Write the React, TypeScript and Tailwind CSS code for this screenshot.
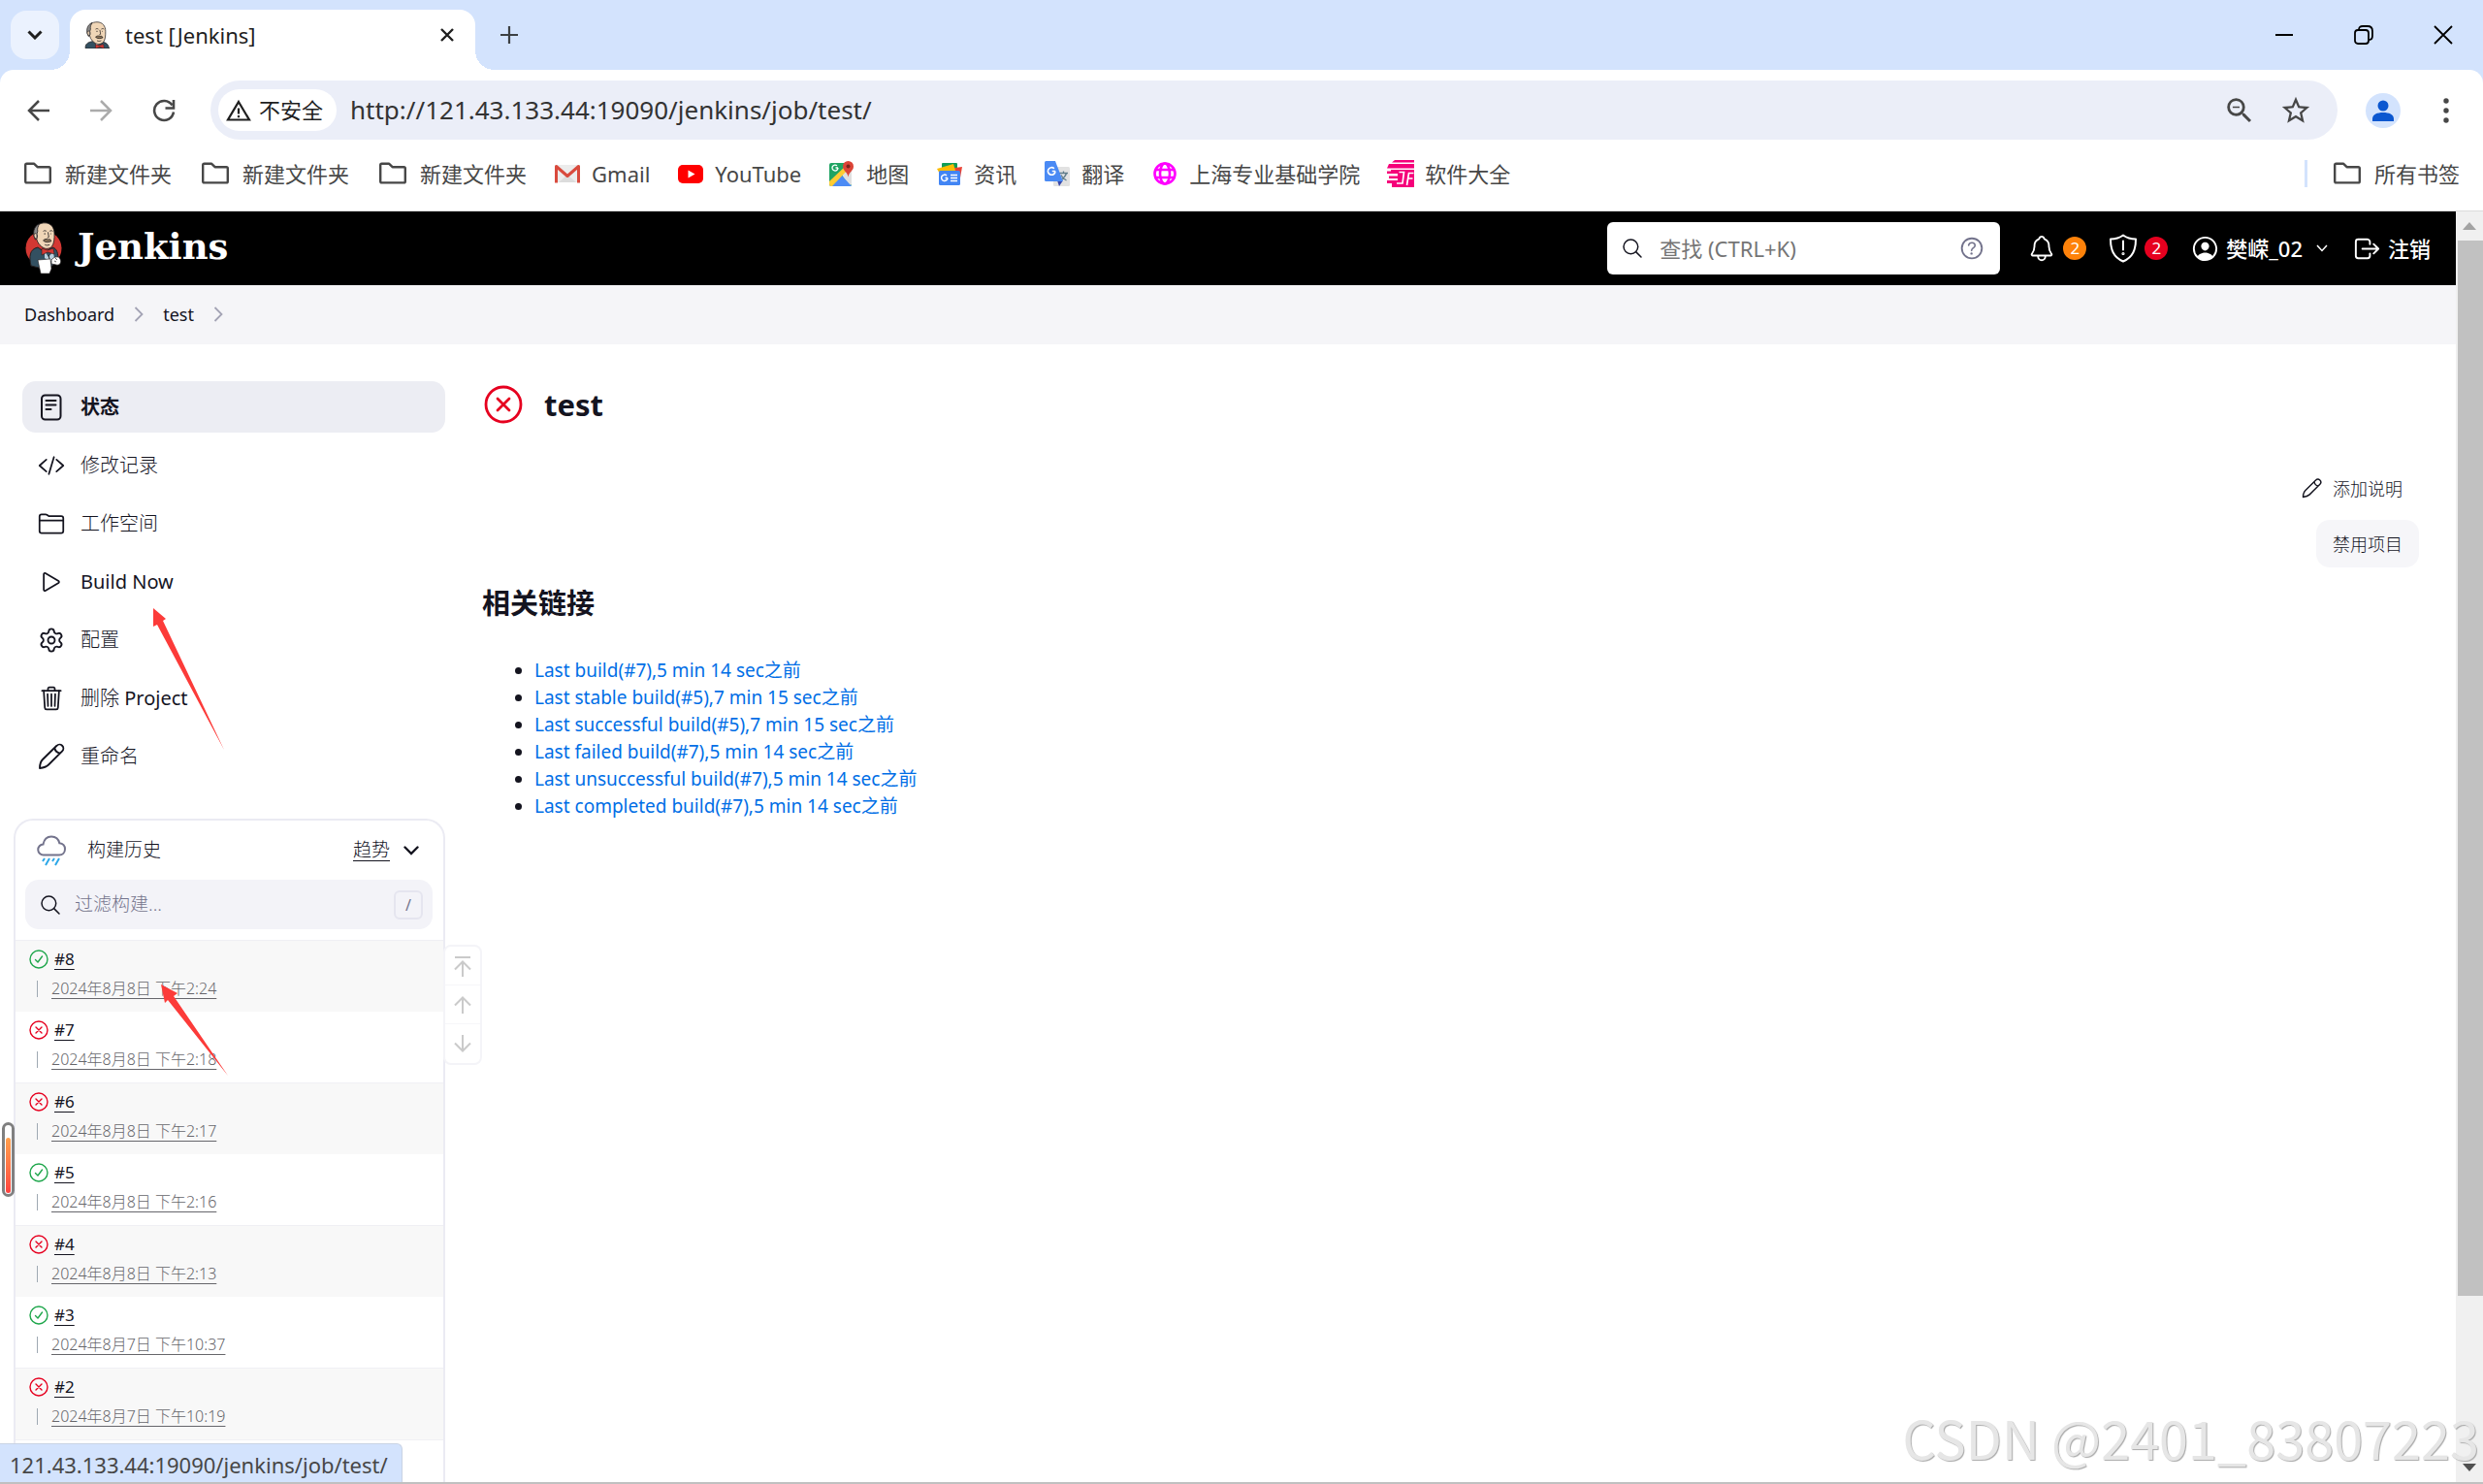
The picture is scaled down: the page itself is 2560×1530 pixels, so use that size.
import type { ReactNode } from "react";
import { Settings } from "lucide-react";
import {
  IoCodeSlashOutline,
  IoFolderOutline,
  IoHelpCircleOutline,
  IoLogOutOutline,
  IoNotificationsOutline,
  IoPersonCircleOutline,
  IoPlayOutline,
  IoSearchOutline,
  IoTrashOutline,
} from "react-icons/io5";
import { MdOutlineZoomOut, MdStarOutline } from "react-icons/md";

type BuildStatus = "success" | "failed";

interface Build {
  id: number;
  status: BuildStatus;
  date: string;
}

const BUILDS: Build[] = [
  { id: 8, status: "success", date: "2024年8月8日 下午2:24" },
  { id: 7, status: "failed", date: "2024年8月8日 下午2:18" },
  { id: 6, status: "failed", date: "2024年8月8日 下午2:17" },
  { id: 5, status: "success", date: "2024年8月8日 下午2:16" },
  { id: 4, status: "failed", date: "2024年8月8日 下午2:13" },
  { id: 3, status: "success", date: "2024年8月7日 下午10:37" },
  { id: 2, status: "failed", date: "2024年8月7日 下午10:19" },
];

const PERMALINKS = [
  "Last build(#7),5 min 14 sec之前",
  "Last stable build(#5),7 min 15 sec之前",
  "Last successful build(#5),7 min 15 sec之前",
  "Last failed build(#7),5 min 14 sec之前",
  "Last unsuccessful build(#7),5 min 14 sec之前",
  "Last completed build(#7),5 min 14 sec之前",
];

function StatusIcon({ status, className }: { status: BuildStatus; className: string }) {
  const failed = status === "failed";
  return (
    <svg
      viewBox="0 0 40 40"
      fill="none"
      stroke={failed ? "#e6001f" : "#1ea64b"}
      strokeWidth={2.8}
      strokeLinecap="round"
      strokeLinejoin="round"
      className={className}
      aria-hidden="true"
    >
      <circle cx="20" cy="20" r="18" />
      {failed ? <path d="M14 14l12 12M26 14L14 26" /> : <path d="M13 21l5 5 9-12" />}
    </svg>
  );
}

function ButlerHead() {
  return (
    <>
      <path d="M10 14C7 4 15 1 21 1c8 0 12 6 12 13 0 5 0 11-3 15-3 3-8 4-12 1-5-3-8-8-8-16z" fill="#f0d6b7" stroke="#231f20" />
      <path d="M9 21C5 13 7 5 14 2c-1 3-3 5-2 9l-1 3c1 3 1 6-2 7z" fill="#8a8a8a" stroke="#231f20" />
      <path d="M10 14c-3-2-4 4 0 6" fill="#f0d6b7" stroke="#231f20" />
      <path d="M19 11c1-1 3-1 4 0M27 11c1-1 3-1 4 0M25 12l1 6-2 1M20 14h2M28 14h1" fill="none" stroke="#231f20" />
      <path d="M19 22c2-2 4-2 6-1 2-1 4 0 4 2-3 1-7 2-10-1z" fill="#8b7355" stroke="#231f20" />
      <path d="M21 27c2 1 4 1 6 0" fill="none" stroke="#231f20" />
    </>
  );
}

function JenkinsFavicon() {
  return (
    <svg viewBox="4 0 34 38" className="h-7 w-7" aria-hidden="true">
      <path d="M5 38c-1-6 3-9 10-10l6 6 8-5c6 1 8 4 9 9z" fill="#335061" stroke="#231f20" />
      <ButlerHead />
      <path d="M19 32l5 2 6-2 1 6-6-2-6 2z" fill="#d33833" stroke="#231f20" strokeWidth=".6" />
    </svg>
  );
}

function JenkinsLogo() {
  return (
    <svg viewBox="0 0 38 54" className="h-[54px] w-[38px]" aria-hidden="true">
      <ellipse cx="19" cy="27" rx="18.500" ry="18" fill="#d33833" />
      <path d="M6 45c-2-9-2-17 7-19l7 5 8-5c5 1 6 7 6 13l-6 6-10 3z" fill="#335061" stroke="#231f20" />
      <path d="M20 30l4 6 5-6 1 8-5 3-5-4z" fill="#b9cfdc" />
      <path d="M24 34l1 4" stroke="#231f20" />
      <g transform="translate(3 0) scale(.82 .86)">
        <ButlerHead />
      </g>
      <path d="M17 27l6 2 6-2 1 6-7-2-6 3z" fill="#d33833" stroke="#231f20" strokeWidth=".6" />
      <path d="M13 39l13-1 1 10-2 5h-9z" fill="#fff" stroke="#231f20" strokeWidth=".6" />
      <path d="M27 39c3-4 8-4 9-1 2 4-1 7-4 6l-5-1z" fill="#fff" stroke="#231f20" strokeWidth=".7" />
      <path d="M30 40l2 1M31 37l2 2" stroke="#231f20" strokeWidth=".7" />
    </svg>
  );
}

function PencilIcon({ className }: { className: string }) {
  return (
    <svg viewBox="0 0 28 28" fill="none" stroke="currentColor" strokeWidth={1.9} strokeLinejoin="round" strokeLinecap="round" className={className} aria-hidden="true">
      <path d="M2 26c0-4 1-7 3-9L19.500 2.800a3.800 3.800 0 0 1 5.700 5.500L11 22.500c-2 2-5 3-9 3.500zM17.300 5c.5 3 2.400 5 5.600 5.600" />
    </svg>
  );
}

function DocumentIcon() {
  return (
    <svg viewBox="0 0 28 28" fill="none" stroke="currentColor" strokeWidth={2} strokeLinecap="round" className="size-7" aria-hidden="true">
      <rect x="4" y="1.500" width="19.500" height="25" rx="3.500" />
      <path d="M8.500 7h10M8.500 11.500h10M8.500 16h5" />
    </svg>
  );
}

function BookmarkFolder() {
  return (
    <svg viewBox="0 0 28 28" fill="none" stroke="#474747" strokeWidth={2.400} strokeLinejoin="round" className="mx-[3px] size-7" aria-hidden="true">
      <path d="M1.200 5.200q0-1.400 1.400-1.400h7.600l3.400 3.400h11.800q1.400 0 1.400 1.400v13.400q0 1.400-1.400 1.400H2.600q-1.400 0-1.400-1.400z" />
    </svg>
  );
}

function GmailIcon() {
  return (
    <svg viewBox="0 0 28 28" className="size-7" aria-hidden="true">
      <path d="M1 5h26v18H1z" fill="#ececec" />
      <path d="M5 23l9-8 9 8z" fill="#dcdcdc" />
      <path d="M2.500 23.500V6.500L14 16.500l11.500-10v17" fill="none" stroke="#d94a3d" strokeWidth={3} strokeLinejoin="round" />
    </svg>
  );
}

function YouTubeIcon() {
  return (
    <svg viewBox="0 0 28 28" className="size-7" aria-hidden="true">
      <rect x="1" y="5" width="26" height="19" rx="5" fill="#f00" />
      <path d="M11.500 10.500l7 4-7 4z" fill="#fff" />
    </svg>
  );
}

function MapsIcon() {
  return (
    <svg viewBox="0 0 28 28" className="size-7" aria-hidden="true">
      <rect x="1" y="3" width="23" height="24" rx="2" fill="#1fa463" />
      <path d="M13 14l11-5v16l-2 2z" fill="#e0e0e0" />
      <path d="M2 27l11-12 11 12z" fill="#4c8bf5" />
      <path d="M1 22L18 6l3 3L4 27H3q-2 0-2-2z" fill="#fc3" />
      <path d="M10 8H7.500M10 8a3 3 0 1 1-1-2.200" fill="none" stroke="#fff" strokeWidth={1.300} />
      <path d="M20.500 1a5.500 5.500 0 0 1 5.500 5.500c0 5-4.500 5-5.500 11-1-6-5.500-6-5.500-11A5.500 5.500 0 0 1 20.500 1z" fill="#db4437" />
      <circle cx="20.500" cy="6.500" r="2" fill="#7a231b" />
    </svg>
  );
}

function NewsIcon() {
  return (
    <svg viewBox="0 0 28 28" className="size-7" aria-hidden="true">
      <rect x="6" y="3" width="16" height="12" rx="1" fill="#0f9d58" />
      <path d="M12 9l15-2-3 17-8-3z" fill="#ea4335" />
      <path d="M1 9l17-5 3 10-15 4z" fill="#fbbc04" />
      <rect x="3" y="11" width="22" height="15" rx="1.500" fill="#4285f4" />
      <path d="M12 18.500H9.500M12 18.500a3.200 3.200 0 1 1-1-2.500M15 15.500h7M15 18.500h7M15 21.500h7" fill="none" stroke="#fff" strokeWidth={1.500} />
    </svg>
  );
}

function TranslateIcon() {
  return (
    <svg viewBox="0 0 28 28" className="size-7" aria-hidden="true">
      <rect x="10" y="7" width="17" height="20" rx="1.500" fill="#e2e2e2" />
      <path d="M16 13.500h9M20.500 11.500v2M23.500 13.500c-1 4-4 6-6 7.500M18 15.500c1 2.500 3.500 4.500 5.500 5.500" fill="none" stroke="#607d8b" strokeWidth={1.300} />
      <path d="M14 21h6l-4 6z" fill="#3949ab" />
      <path d="M2.500 1H12l8 21H2.500Q1 22 1 20.500v-18Q1 1 2.500 1z" fill="#4a8af4" />
      <path d="M12 11.500H8.800M12 11.500a3.800 3.800 0 1 1-1.100-2.700" fill="none" stroke="#fff" strokeWidth={1.600} />
    </svg>
  );
}

function MagentaGlobeIcon() {
  return (
    <svg viewBox="0 0 28 28" fill="none" stroke="#f0f" strokeWidth={2.600} className="size-7" aria-hidden="true">
      <circle cx="14" cy="14" r="10.500" />
      <ellipse cx="14" cy="14" rx="5" ry="10.500" />
      <path d="M4.500 10h19M4.500 18h19" />
    </svg>
  );
}

function PinkBrandIcon() {
  return (
    <svg viewBox="0 0 28 28" className="size-7" aria-hidden="true">
      <path d="M8 0h20v2.500H5zM2 4h26v4.500H0zM4 10h24v18H5v-4H0v-3h11v-2H2v-2.500h9V14H0v-2.500h4z" fill="#f5007a" />
      <path d="M12.500 12.500h5l-1.500 11.500h-6M20.500 26l2-12.500h5M21.500 19h5" fill="none" stroke="#fff" strokeWidth={1.700} />
    </svg>
  );
}

const BOOKMARKS: { label: string; icon: ReactNode }[] = [
  { label: "新建文件夹", icon: <BookmarkFolder /> },
  { label: "新建文件夹", icon: <BookmarkFolder /> },
  { label: "新建文件夹", icon: <BookmarkFolder /> },
  { label: "Gmail", icon: <GmailIcon /> },
  { label: "YouTube", icon: <YouTubeIcon /> },
  { label: "地图", icon: <MapsIcon /> },
  { label: "资讯", icon: <NewsIcon /> },
  { label: "翻译", icon: <TranslateIcon /> },
  { label: "上海专业基础学院", icon: <MagentaGlobeIcon /> },
  { label: "软件大全", icon: <PinkBrandIcon /> },
];

const TASKS: { id: string; label: ReactNode; icon: ReactNode; active?: boolean }[] = [
  { id: "status", label: "状态", icon: <DocumentIcon />, active: true },
  { id: "changes", label: "修改记录", icon: <IoCodeSlashOutline className="size-7" /> },
  { id: "workspace", label: "工作空间", icon: <IoFolderOutline className="size-7" /> },
  { id: "build", label: <span className="font-normal">Build Now</span>, icon: <IoPlayOutline className="size-7" /> },
  { id: "configure", label: "配置", icon: <Settings className="size-7" strokeWidth={1.6} /> },
  {
    id: "delete",
    label: (
      <span>
        删除 <span className="font-normal">Project</span>
      </span>
    ),
    icon: <IoTrashOutline className="size-7" />,
  },
  { id: "rename", label: "重命名", icon: <PencilIcon className="size-7" /> },
];

function TabStrip() {
  return (
    <div className="flex h-[72px] shrink-0 items-center">
      <button
        type="button"
        aria-label="Search tabs"
        className="ml-[11px] flex size-[50px] items-center justify-center rounded-2xl bg-[#ebf2fe]"
      >
        <svg viewBox="0 0 16 10" fill="none" stroke="#1f1f1f" strokeWidth={3} className="w-4" aria-hidden="true">
          <path d="M1.500 1.500L8 8l6.500-6.500" />
        </svg>
      </button>
      <div className="relative ml-[11px] flex w-[418px] items-center self-stretch pt-[10px]">
        <div className="flex h-full w-full items-center rounded-t-2xl bg-white pr-[21px] pb-[10px] pl-[14px]">
          <JenkinsFavicon />
          <span className="ml-[15px] flex-1 text-[22px] text-[#1f1f1f]">test [Jenkins]</span>
          <button type="button" aria-label="Close tab">
            <svg viewBox="0 0 16 16" stroke="#1f1f1f" strokeWidth={2.400} className="size-4" aria-hidden="true">
              <path d="M2 2l12 12M14 2L2 14" />
            </svg>
          </button>
        </div>
        <span className="absolute bottom-0 -left-5 size-5 bg-[radial-gradient(circle_at_top_left,transparent_20px,#fff_20px)]" />
        <span className="absolute -right-5 bottom-0 size-5 bg-[radial-gradient(circle_at_top_right,transparent_20px,#fff_20px)]" />
      </div>
      <button type="button" aria-label="New tab" className="ml-[26px]">
        <svg viewBox="0 0 18 18" stroke="#3c4043" strokeWidth={2.200} className="size-[18px]" aria-hidden="true">
          <path d="M9 0v18M0 9h18" />
        </svg>
      </button>
      <div className="ml-auto flex items-center gap-[62px] pr-[31px]">
        <button type="button" aria-label="Minimize">
          <svg viewBox="0 0 20 20" stroke="#000" strokeWidth={2} className="size-5" aria-hidden="true">
            <path d="M1 10h18" />
          </svg>
        </button>
        <button type="button" aria-label="Restore">
          <svg viewBox="0 0 20 20" fill="none" stroke="#000" strokeWidth={1.800} className="size-5" aria-hidden="true">
            <rect x="1" y="5" width="14" height="14" rx="3" />
            <path d="M5 4.500Q5 1 9 1h5q5 0 5 5v5q0 4-3.500 4" />
          </svg>
        </button>
        <button type="button" aria-label="Close">
          <svg viewBox="0 0 20 20" stroke="#000" strokeWidth={1.800} className="size-5" aria-hidden="true">
            <path d="M1 1l18 18M19 1L1 19" />
          </svg>
        </button>
      </div>
    </div>
  );
}

function Toolbar() {
  return (
    <div className="flex h-[83px] items-center pl-[28px]">
      <button type="button" aria-label="Back">
        <svg viewBox="0 0 24 24" fill="none" stroke="#474747" strokeWidth={2.500} className="size-6" aria-hidden="true">
          <path d="M23 12H3M12 2L2 12l10 10" />
        </svg>
      </button>
      <button type="button" aria-label="Forward" className="ml-10">
        <svg viewBox="0 0 24 24" fill="none" stroke="#ababab" strokeWidth={2.500} className="size-6" aria-hidden="true">
          <path d="M1 12h20M12 2l10 10-10 10" />
        </svg>
      </button>
      <button type="button" aria-label="Reload" className="ml-[41px]">
        <svg viewBox="0 0 24 24" fill="none" stroke="#474747" strokeWidth={2.600} className="size-6" aria-hidden="true">
          <path d="M20.500 6.500A10 10 0 1 0 22 13.500M22 1v8.500h-8.500" />
        </svg>
      </button>
      <div className="ml-9 flex h-[61px] min-w-0 flex-1 items-center rounded-full bg-[#ebeef8] pr-[26px] pl-2">
        <button type="button" className="flex h-[43px] items-center gap-2 rounded-full bg-white pr-[14px] pl-2 text-[22px] text-[#1f1f1f]">
          <svg viewBox="0 0 26 24" fill="none" stroke="#1f1f1f" strokeWidth={2.200} className="w-[26px]" aria-hidden="true">
            <path d="M13 3L24 21.500H2zM13 9.500v6M13 17v2.200" />
          </svg>
          不安全
        </button>
        <input
          type="text"
          aria-label="Address"
          defaultValue="http://121.43.133.44:19090/jenkins/job/test/"
          className="ml-[14px] min-w-0 flex-1 bg-transparent text-[26px] text-[#333] outline-none"
        />
        <button type="button" aria-label="Zoom">
          <MdOutlineZoomOut className="size-[34px] text-[#474747]" />
        </button>
        <button type="button" aria-label="Bookmark this page" className="ml-6">
          <MdStarOutline className="size-[34px] text-[#474747]" />
        </button>
      </div>
      <button type="button" aria-label="Profile" className="ml-[29px] flex size-9 items-center justify-center rounded-full bg-[#d3e3fd]">
        <svg viewBox="0 0 24 24" fill="#0b57d0" className="size-6" aria-hidden="true">
          <circle cx="12" cy="7" r="5.500" />
          <path d="M1 23v-2.500C1 16 6 14 12 14s11 2 11 6.500V23z" />
        </svg>
      </button>
      <button type="button" aria-label="Menu" className="mr-8 ml-[41px]">
        <svg viewBox="0 0 12 26" fill="#474747" className="w-3" aria-hidden="true">
          <circle cx="6" cy="3" r="2.700" />
          <circle cx="6" cy="13" r="2.700" />
          <circle cx="6" cy="23" r="2.700" />
        </svg>
      </button>
    </div>
  );
}

function BookmarkBar() {
  return (
    <nav aria-label="Bookmarks" className="flex h-[63px] items-center border-b border-[#dcdcdc] pb-[14px] pl-[22px] text-[22px] leading-7 text-[#474747]">
      <div className="flex items-center gap-7">
        {BOOKMARKS.map((bookmark, i) => (
          <a key={i} href="#" className="flex items-center gap-[11px] whitespace-nowrap">
            {bookmark.icon}
            {bookmark.label}
          </a>
        ))}
      </div>
      <div className="ml-auto flex items-center pr-6">
        <span className="mr-6 h-7 w-[3px] bg-[#d3e3fd]" />
        <a href="#" className="flex items-center gap-[11px]">
          <BookmarkFolder />
          所有书签
        </a>
      </div>
    </nav>
  );
}

function Header() {
  return (
    <header className="flex h-[76px] items-center bg-black pr-[26px] pl-[26px] text-white">
      <a href="#" className="flex items-center">
        <JenkinsLogo />
        <span className="ml-4 pb-1 font-['DejaVu_Serif',serif] text-[37px] leading-[50px] font-bold">Jenkins</span>
      </a>
      <div className="ml-auto flex h-[54px] w-[405px] items-center rounded-md bg-white px-[14px]">
        <IoSearchOutline className="size-6 shrink-0 text-[#14141f]" />
        <input
          type="search"
          aria-label="查找"
          placeholder="查找 (CTRL+K)"
          className="ml-4 min-w-0 flex-1 bg-transparent text-[22px] text-black outline-none placeholder:text-[#757575]"
        />
        <IoHelpCircleOutline className="size-[30px] text-[#73738c]" />
      </div>
      <button type="button" aria-label="Notifications" className="ml-[28px] flex items-center gap-[7px]">
        <IoNotificationsOutline className="size-[30px]" />
        <span className="flex size-6 items-center justify-center rounded-full bg-[#fe820a] text-[17px]">2</span>
      </button>
      <button type="button" aria-label="Security warnings" className="ml-[23px] flex items-center gap-[7px]">
        <svg viewBox="0 0 30 30" fill="none" stroke="#fff" strokeWidth={2} strokeLinejoin="round" className="size-[30px]" aria-hidden="true">
          <path d="M15 1.500c4 3 8 4 13 4 0 11-3 18.500-13 23C5 24 2 16.500 2 5.500c5 0 9-1 13-4zM15 7.500v9" strokeLinecap="round" />
          <circle cx="15" cy="20.500" r=".6" />
        </svg>
        <span className="flex size-6 items-center justify-center rounded-full bg-[#e6001f] text-[17px]">2</span>
      </button>
      <a href="#" className="ml-[23px] flex items-center gap-[6px] text-[22px] leading-7 font-medium">
        <IoPersonCircleOutline className="size-[31px]" />
        <span>樊嵘_02</span>
      </a>
      <button type="button" aria-label="User menu" className="ml-[14px]">
        <svg viewBox="0 0 12 8" fill="none" stroke="#fff" strokeWidth={1.500} className="w-3" aria-hidden="true">
          <path d="M1 1l5 5.500L11 1" />
        </svg>
      </button>
      <a href="#" className="ml-[25px] flex items-center gap-[6px] text-[22px] leading-7 font-medium">
        <IoLogOutOutline className="size-[31px]" />
        注销
      </a>
    </header>
  );
}

function Breadcrumbs() {
  const chevron = (
    <svg viewBox="0 0 10 16" fill="none" stroke="#a3a3b5" strokeWidth={1.800} className="h-4 w-[10px]" aria-hidden="true">
      <path d="M1.500 1l7 7-7 7" />
    </svg>
  );
  return (
    <nav aria-label="Breadcrumbs" className="flex h-[61px] items-center bg-[#f5f5f8] pb-px pl-[25px] text-lg text-[#14141f]">
      <a href="#">Dashboard</a>
      <span className="mx-5">{chevron}</span>
      <a href="#">test</a>
      <span className="ml-5">{chevron}</span>
    </nav>
  );
}

function BuildRow({ build }: { build: Build }) {
  return (
    <li className="even:bg-white odd:border-t odd:border-[#f0f0f4] odd:bg-[#f8f8f8]">
      <div className="flex h-[73px] flex-col pt-[5px] pl-[14px]">
        <div className="flex items-center gap-[6px]">
          <StatusIcon status={build.status} className="size-5" />
          <a href="#" className="text-[17px] leading-7 text-[#14141f] underline underline-offset-4">
            #{build.id}
          </a>
        </div>
        <div className="flex items-center gap-[14px] pl-2">
          <span className="h-[17px] w-px bg-[#9fa9b3]" />
          <a href="#" className="text-[16px] leading-8 font-light text-[#66666b] underline underline-offset-4">
            {build.date}
          </a>
        </div>
      </div>
    </li>
  );
}

function BuildHistory() {
  return (
    <section className="relative mt-[38px] ml-[14px] flex min-h-0 flex-1 flex-col rounded-t-[20px] border-x-2 border-t-2 border-[#ebebf3]">
      <div className="flex h-[61px] items-center pr-[25px] pl-[22px] text-[19px] font-light text-[#14141f]">
        <svg viewBox="0 0 30 32" fill="none" className="w-[30px] shrink-0" aria-hidden="true">
          <path d="M7 20.500a5.500 5.500 0 0 1-.5-11C7.500 4 11 1.500 15 1.500c4.500 0 7.500 3 8.300 6.800 3.700.3 5.700 3 5.700 6 0 3.700-2.500 6.200-6 6.200z" stroke="#73738c" strokeWidth={2} />
          <path d="M8 24l-2 3M13 24l-4 7M18 24l-2 3M23 24l-4 7" stroke="#2da8e8" strokeWidth={2} />
        </svg>
        <h2 className="ml-[22px] flex-1">构建历史</h2>
        <a href="#" className="underline underline-offset-4">
          趋势
        </a>
        <button type="button" aria-label="Collapse" className="ml-[14px]">
          <svg viewBox="0 0 16 10" fill="none" stroke="#14141f" strokeWidth={2.400} strokeLinecap="round" className="w-4" aria-hidden="true">
            <path d="M1.500 1.500L8 8l6.500-6.500" />
          </svg>
        </button>
      </div>
      <label className="mr-[11px] mb-[11px] ml-[10px] flex h-[51px] shrink-0 items-center rounded-[14px] bg-[#f3f3f8] pr-[10px] pl-[14px]">
        <IoSearchOutline className="size-6 text-[#14141f]" />
        <input
          type="search"
          aria-label="过滤构建"
          placeholder="过滤构建..."
          className="ml-[13px] min-w-0 flex-1 bg-transparent text-[19px] font-light outline-none placeholder:text-[#73738c]"
        />
        <kbd className="flex size-[30px] items-center justify-center rounded-md border-2 border-[#e5e5ef] font-[inherit] text-base text-[#73738c]">/</kbd>
      </label>
      <ul>
        {BUILDS.map((build) => (
          <BuildRow key={build.id} build={build} />
        ))}
      </ul>
      <div className="h-11 border-t border-[#f0f0f4]" />
      <BuildPager />
    </section>
  );
}

function BuildPager() {
  const arrows = [
    { label: "Newest builds", d: "M4 3h16M12 23V8M4 15.500L12 7.500l8 8" },
    { label: "Newer builds", d: "M12 21V5M4 12.500L12 4.500l8 8" },
    { label: "Older builds", d: "M12 3v16M4 11.500l8 8 8-8" },
  ];
  return (
    <div className="absolute top-[128px] -right-10 w-10 divide-y divide-[#f6f6f9] rounded-lg border-2 border-[#f4f4f8] bg-white">
      {arrows.map((arrow) => (
        <button key={arrow.label} type="button" aria-label={arrow.label} className="flex h-10 w-full items-center justify-center">
          <svg viewBox="0 0 24 24" fill="none" stroke="#cacaca" strokeWidth={2} className="size-6" aria-hidden="true">
            <path d={arrow.d} />
          </svg>
        </button>
      ))}
    </div>
  );
}

function SidePanel() {
  return (
    <aside className="flex w-[459px] shrink-0 flex-col pt-[38px]">
      <nav aria-label="Tasks" className="flex flex-col gap-[7px] pl-[23px]">
        {TASKS.map((task) => (
          <a
            key={task.id}
            href="#"
            className={
              task.active
                ? "flex h-[53px] items-center gap-4 rounded-[14px] bg-[#ecedf3] pt-px pl-4 text-xl font-bold text-[#14141f]"
                : "flex h-[53px] items-center gap-4 rounded-[14px] pt-px pl-4 text-xl font-light text-[#14141f]"
            }
          >
            {task.icon}
            {task.label}
          </a>
        ))}
      </nav>
      <BuildHistory />
    </aside>
  );
}

function JobPage() {
  return (
    <main className="min-w-0 flex-1 pt-[38px] pr-[38px] pl-[38px] text-[#14141f]">
      <div className="flex h-12 items-center gap-[22px]">
        <StatusIcon status="failed" className="ml-[2px] size-10" />
        <h1 className="text-[31px] font-bold">test</h1>
      </div>
      <div className="mt-[38px] flex flex-col items-end gap-2 text-lg font-light">
        <button type="button" className="flex h-[49px] items-center gap-[11px] px-[17px]">
          <PencilIcon className="size-[21px]" />
          添加说明
        </button>
        <button type="button" className="h-[49px] rounded-[14px] bg-[#f6f6f9] px-[17px]">
          禁用项目
        </button>
      </div>
      <h2 className="mt-[19px] text-[29px] leading-9 font-bold">相关链接</h2>
      <ul className="mt-[37px] list-disc pl-[54px] text-[19px] leading-7">
        {PERMALINKS.map((link) => (
          <li key={link}>
            <a href="#" className="text-[#006ee6]">
              {link}
            </a>
          </li>
        ))}
      </ul>
    </main>
  );
}

function Scrollbar() {
  return (
    <div className="flex w-7 shrink-0 flex-col bg-[#f0f0f0]" aria-hidden="true">
      <div className="flex h-[30px] items-center justify-center">
        <svg viewBox="0 0 14 8" className="w-[14px]">
          <path d="M7 0l7 8H0z" fill="#a3a3a3" />
        </svg>
      </div>
      <div className="flex-1 pl-[2px]">
        <div className="h-[87%] bg-[#c1c1c1]" />
      </div>
      <div className="flex h-[30px] items-center justify-center">
        <svg viewBox="0 0 14 8" className="w-[14px]">
          <path d="M0 0h14L7 8z" fill="#505050" />
        </svg>
      </div>
    </div>
  );
}

function Annotations() {
  return (
    <svg viewBox="0 0 260 900" className="pointer-events-none absolute top-0 left-0 h-[900px] w-[260px]" aria-hidden="true">
      <g fill="#fc3b39">
        <path d="M158 409l13 11-3 2 63 133-69-129-4 2z" />
        <path d="M166 797l17 9-4 3 56 82-62-78-3 3z" />
      </g>
    </svg>
  );
}

export default function App() {
  return (
    <div className="flex h-screen flex-col overflow-hidden border-b-2 border-[#c0c0c0] bg-[#d3e3fd] font-['Noto_Sans','Noto_Sans_CJK_SC',sans-serif]">
      <TabStrip />
      <div className="shrink-0 rounded-t-[14px] bg-white">
        <Toolbar />
        <BookmarkBar />
      </div>
      <div className="relative flex min-h-0 flex-1 overflow-hidden bg-white">
        <div className="flex min-w-0 flex-1 flex-col">
          <Header />
          <Breadcrumbs />
          <div className="flex min-h-0 flex-1">
            <SidePanel />
            <JobPage />
          </div>
        </div>
        <Scrollbar />
        <Annotations />
        <div className="absolute bottom-[294px] left-[2px] flex h-[77px] w-[13px] items-end rounded-full border-[3px] border-[#808080] bg-white p-px" aria-hidden="true">
          <span className="h-[57px] w-full rounded-full bg-linear-to-b from-[#ffa04d] to-[#ff4040]" />
        </div>
        <div className="absolute bottom-0 left-0 h-10 rounded-tr-md border-t border-r border-[#c9d3e4] bg-[#d3e3fd] pr-[14px] pl-[10px] text-[22px] leading-[42px] text-[#474747]">
          121.43.133.44:19090/jenkins/job/test/
        </div>
        <div className="absolute right-1 bottom-[14px] font-['Noto_Sans_CJK_SC',sans-serif] text-[54px] leading-[64px] text-[#e6e6e6] [text-shadow:1px_1px_1px_#a8a8a8]">
          CSDN @2401_83807223
        </div>
      </div>
    </div>
  );
}
